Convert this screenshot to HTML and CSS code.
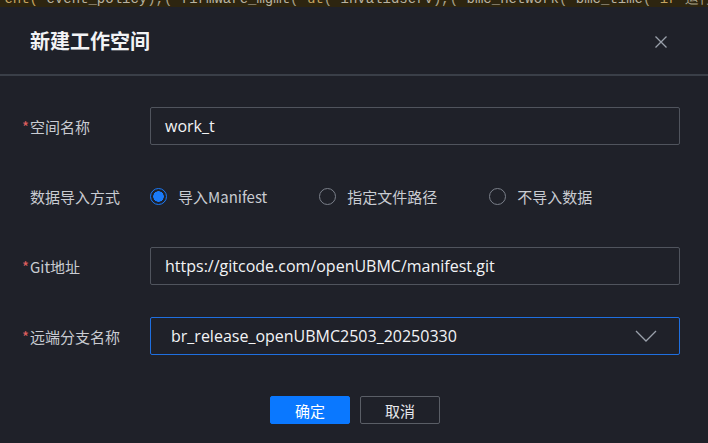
FILE: index.html
```html
<!DOCTYPE html>
<html>
	<head>
		<meta charset="UTF-8">
		<title>新建工作空间</title>
		<link rel="stylesheet" href="styles.css">
	</head>
	<body>
		<div class="codigoFondo">
			<div class="lineaCodigo">
				<span class="c1">rent(</span> <span class="c2">event_policy</span>),( <span class="c2">firmware_mgmt</span>( <span class="c1">ut</span>( <span class="c2">invalidserv</span>),( <span class="c2">bmc_network</span>( <span class="c2">bmc_time</span>( <span class="c1">ir</span> 运行) 的
			</div>
		</div>
		<div class="dialogo">
			<div class="cabecera">
				<div class="titulo">新建工作空间</div>
				<svg class="cerrar" width="14" height="14" viewBox="0 0 14 14">
					<path d="M1.5 1.5 L12.5 12.5 M12.5 1.5 L1.5 12.5" stroke="#9aa0ab" stroke-width="1.3" fill="none"/>
				</svg>
			</div>
			<div class="formulario">
				<div class="fila">
					<label class="etiqueta"><span class="req">*</span>空间名称</label>
					<div class="campo">work_t</div>
				</div>
				<div class="fila">
					<label class="etiqueta sinReq">数据导入方式</label>
					<div class="radios">
						<span class="radio activo"><i></i>导入Manifest</span>
						<span class="radio"><i></i>指定文件路径</span>
						<span class="radio"><i></i>不导入数据</span>
					</div>
				</div>
				<div class="fila">
					<label class="etiqueta"><span class="req">*</span>Git地址</label>
					<div class="campo">https://gitcode.com/openUBMC/manifest.git</div>
				</div>
				<div class="fila">
					<label class="etiqueta"><span class="req">*</span>远端分支名称</label>
					<div class="campo selector">
						<span>br_release_openUBMC2503_20250330</span>
						<svg width="22" height="12" viewBox="0 0 22 12">
							<path d="M1 1 L11 11 L21 1" stroke="#9aa0ab" stroke-width="1.3" fill="none"/>
						</svg>
					</div>
				</div>
			</div>
			<div class="botones">
				<button class="boton primario">确定</button>
				<button class="boton">取消</button>
			</div>
		</div>
	</body>
</html>
```

FILE: styles.css
```css
body {
	margin: 0;
	background: #1f2129;
	font-family: "Open Sans", "Noto Sans CJK SC", sans-serif;
	color: #e6e8ec;
	overflow: hidden;
}
/* franja del editor que queda detras del dialogo */
div.codigoFondo {
	height: 7px;
	overflow: hidden;
	background: #2d2510;
}
div.lineaCodigo {
	margin-top: -8px;
	font-family: "Liberation Mono", monospace;
	font-size: 14px;
	line-height: 14px;
	white-space: nowrap;
	color: #a8a28c;
	text-indent: -4px;
}
.c1 { color: #c4a460; }
.c2 { color: #b8b2a0; }

div.dialogo {
	background: #1f2129;
}
div.cabecera {
	height: 67px;
	display: flex;
	align-items: center;
	justify-content: space-between;
	padding: 0 40px 0 30px;
	border-bottom: 2px solid #3a3f48;
}
div.titulo {
	font-family: "Noto Sans CJK SC", sans-serif;
	font-size: 20px;
	font-weight: bold;
	color: #f2f3f5;
}
svg.cerrar {
	display: block;
	margin-top: 2px;
}
div.formulario {
	padding: 31px 28px 0 22px;
	display: flex;
	flex-direction: column;
	gap: 32px;
}
div.fila {
	display: flex;
	align-items: center;
	height: 38px;
}
label.etiqueta {
	width: 128px;
	font-family: "Noto Sans CJK SC", sans-serif;
	font-size: 15px;
	color: #c9ccd2;
}
label.sinReq {
	padding-left: 8px;
	width: 120px;
}
span.req {
	color: #e06060;
	display: inline-block;
	width: 8px;
}
div.campo {
	flex: 1;
	height: 36px;
	box-sizing: content-box;
	border: 1px solid #50545d;
	border-radius: 2px;
	padding: 0 14px;
	display: flex;
	align-items: center;
	font-size: 16px;
	color: #f2f3f5;
}
div.selector {
	border-color: #1f6fe0;
	justify-content: space-between;
	padding: 0 22px 0 20px;
}
div.selector svg {
	display: block;
}
div.radios {
	display: flex;
	font-family: "Noto Sans CJK SC", sans-serif;
	font-size: 15px;
	color: #c9ccd2;
}
span.radio {
	display: flex;
	align-items: center;
	margin-right: 52px;
}
span.radio i {
	width: 17px;
	height: 17px;
	border: 1.5px solid #7b808a;
	border-radius: 50%;
	margin-right: 11px;
	box-sizing: border-box;
}
span.activo i {
	border-color: #1a7af8;
	background: radial-gradient(circle, #1a7af8 0 5px, transparent 5.5px);
}
div.botones {
	display: flex;
	justify-content: center;
	gap: 10px;
	padding-top: 41px;
	padding-left: 2px;
}
button.boton {
	width: 80px;
	height: 28px;
	border: 1px solid #5a5e66;
	border-radius: 2px;
	background: transparent;
	color: #e6e8ec;
	font-family: "Noto Sans CJK SC", sans-serif;
	font-size: 15px;
}
button.primario {
	background: #0a78ff;
	border-color: #0a78ff;
	color: #ffffff;
}
```
